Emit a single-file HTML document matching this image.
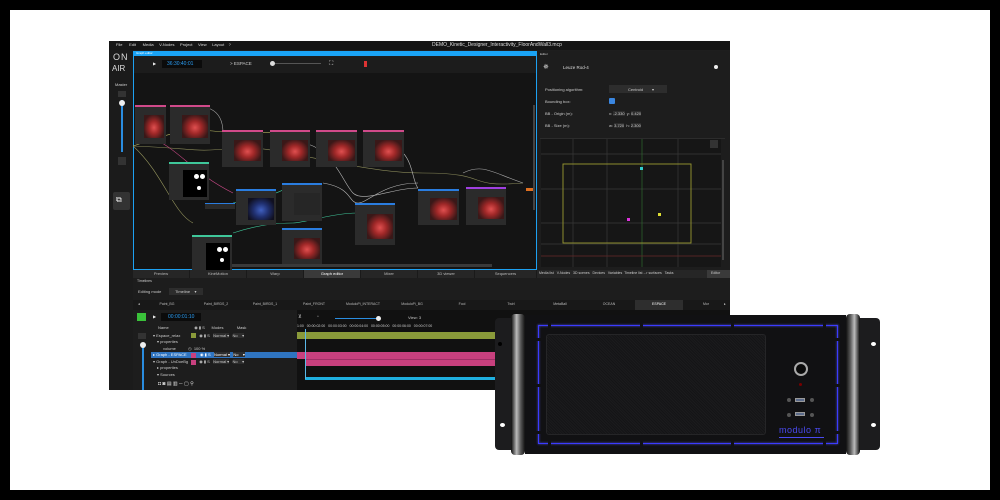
<!DOCTYPE html>
<html><head><meta charset="utf-8"><style>
*{margin:0;padding:0;box-sizing:border-box}
body{width:1000px;height:500px;background:#000;position:relative;overflow:hidden;font-family:"Liberation Sans",sans-serif}
.a{position:absolute}
.t{position:absolute;color:#ccc;font-size:4px;white-space:nowrap;line-height:1}
.node{position:absolute;background:#2b2b2b;border-top:2px solid #d04a8a}
.node .img{position:absolute;left:30%;top:22%;width:65%;height:62%;background:radial-gradient(ellipse at 50% 55%,#e05050 0%,#a02828 35%,#3a1818 75%)}
.wn{position:absolute;background:#2b2b2b;border-top:2px solid #3fc79a}
.wn .img{position:absolute;left:35%;top:18%;width:60%;height:75%;background:#000}
.dot{position:absolute;width:5px;height:5px;border-radius:50%;background:#fff}
.tab{position:absolute;top:270px;height:8px;color:#bbb;font-size:4px;text-align:center;line-height:8px;background:#262626;border-right:1px solid #1a1a1a}
.led{position:absolute;background:#3b3bff;box-shadow:0 0 2px #5a5aff}
.gap{position:absolute;background:#111113}
.sq{position:absolute;top:303px;font-size:3.5px;color:#bbb;white-space:nowrap;line-height:1;transform:translateX(-50%)}
</style></head><body>
<div class="a" style="left:10px;top:10px;width:980px;height:480px;background:#fff"></div>

<!-- software screenshot -->
<div class="a" style="left:109px;top:41px;width:621px;height:349px;background:#1e1e1e"></div>
<div class="a" style="left:109px;top:41px;width:621px;height:9px;background:#151515"></div>
<div class="t" style="left:116px;top:43px;color:#ddd">File &nbsp;&nbsp;&nbsp;&nbsp; Edit &nbsp;&nbsp;&nbsp;&nbsp; Media &nbsp;&nbsp;&nbsp; V-Nodes &nbsp;&nbsp;&nbsp; Project &nbsp;&nbsp;&nbsp; View &nbsp;&nbsp;&nbsp; Layout &nbsp;&nbsp; ?</div>
<div class="t" style="left:432px;top:43px;color:#ddd;font-size:5px">DEMO_Kinetic_Designer_Interactivity_FloorAndWall3.mcp</div>
<div class="a" style="left:109px;top:50px;width:24px;height:340px;background:#1b1b1b"></div>
<div class="t" style="left:113px;top:53px;color:#ddd;font-size:9px;letter-spacing:1px">ON</div>
<div class="t" style="left:112px;top:65px;color:#ddd;font-size:8px">AIR</div>
<div class="t" style="left:115px;top:83px">Master</div>
<div class="a" style="left:118px;top:91px;width:8px;height:6px;background:#333"></div>
<div class="a" style="left:121px;top:100px;width:2px;height:52px;background:#2a8de0"></div>
<div class="a" style="left:119px;top:100px;width:6px;height:6px;border-radius:50%;background:#eee"></div>
<div class="a" style="left:118px;top:157px;width:8px;height:8px;background:#333"></div>
<div class="a" style="left:113px;top:192px;width:17px;height:18px;background:#333;border-radius:2px"></div>
<div class="t" style="left:116px;top:196px;color:#eee;font-size:8px">⧉</div>

<!-- graph editor -->
<div class="a" style="left:133px;top:51px;width:404px;height:219px;border:1px solid #1da1f2;background:#141414"></div>
<div class="a" style="left:133px;top:51px;width:404px;height:5px;background:#1aa3f5"></div>
<div class="t" style="left:136px;top:52px;color:#fff;font-size:3px">Graph editor</div>
<div class="a" style="left:134px;top:56px;width:402px;height:17px;background:#1c1c1c"></div>
<div class="t" style="left:153px;top:62px;color:#eee">▶</div>
<div class="a" style="left:162px;top:60px;width:40px;height:8px;background:#0b0b0b"></div>
<div class="t" style="left:167px;top:62px;color:#2a9df4;font-size:5px">36:30:40:01</div>
<div class="t" style="left:230px;top:62px;font-size:4.5px">&gt; ESPACE</div>
<div class="a" style="left:271px;top:63px;width:50px;height:1px;background:#555"></div>
<div class="a" style="left:270px;top:61px;width:5px;height:5px;border-radius:50%;background:#ddd"></div>
<div class="t" style="left:329px;top:61px;font-size:6px">⛶</div>
<div class="a" style="left:364px;top:61px;width:3px;height:6px;background:#d33"></div>
<svg class="a" style="left:133px;top:73px" width="404" height="197">
<g fill="none" stroke-width="0.6">
<path d="M0 73 C60 75 60 80 100 75 S220 100 290 100 S330 115 390 110" stroke="#8a8a5a"/>
<path d="M0 73 C40 60 50 55 80 58 S140 58 150 60" stroke="#b0b060"/>
<path d="M0 73 C30 100 40 140 60 150" stroke="#999960"/>
<path d="M75 35 C90 40 90 55 90 60" stroke="#aaa"/>
<path d="M20 65 C50 80 60 100 100 120" stroke="#d04a8a"/>
<path d="M170 70 C200 75 210 110 220 120 S260 115 285 115" stroke="#bbb"/>
<path d="M270 80 C280 90 280 110 285 115" stroke="#bbb"/>
<path d="M100 130 C130 125 150 120 160 110" stroke="#3fc79a"/>
<path d="M100 160 C130 150 150 150 160 150 S200 140 225 140" stroke="#3fc79a"/>
<path d="M190 110 C220 115 215 130 225 130 S250 110 285 110" stroke="#bbb"/>
<path d="M330 100 C350 90 360 100 390 110" stroke="#aaa"/>
</g></svg>
<div class="node" style="left:135px;top:105px;width:31px;height:39px"><div class="img"></div></div>
<div class="node" style="left:170px;top:105px;width:40px;height:39px"><div class="img"></div></div>
<div class="node" style="left:222px;top:130px;width:41px;height:37px"><div class="img"></div></div>
<div class="node" style="left:270px;top:130px;width:40px;height:37px"><div class="img"></div></div>
<div class="node" style="left:316px;top:130px;width:41px;height:37px"><div class="img"></div></div>
<div class="node" style="left:363px;top:130px;width:41px;height:37px"><div class="img"></div></div>
<div class="wn" style="left:169px;top:162px;width:40px;height:38px"><div class="img"></div><div class="dot" style="left:25px;top:10px"></div><div class="dot" style="left:31px;top:10px"></div><div class="dot" style="left:28px;top:22px;width:4px;height:4px"></div></div>
<div class="wn" style="left:192px;top:235px;width:40px;height:37px"><div class="img"></div><div class="dot" style="left:25px;top:10px"></div><div class="dot" style="left:31px;top:10px"></div><div class="dot" style="left:28px;top:21px;width:4px;height:4px"></div></div>
<div class="a" style="left:205px;top:203px;width:30px;height:6px;background:#2b2b2b;border-top:1px solid #2a7de0"></div>
<div class="node" style="left:236px;top:189px;width:40px;height:36px;border-top-color:#2a7de0"><div class="img" style="background:radial-gradient(ellipse at 50% 55%,#4060c0 0%,#203070 40%,#101020 80%)"></div></div>
<div class="node" style="left:282px;top:183px;width:40px;height:38px;border-top-color:#2a7de0"><div class="img" style="background:#262626"></div></div>
<div class="node" style="left:282px;top:228px;width:40px;height:37px;border-top-color:#2a7de0"><div class="img"></div></div>
<div class="node" style="left:355px;top:203px;width:40px;height:42px;border-top-color:#2a7de0"><div class="img"></div></div>
<div class="node" style="left:418px;top:189px;width:41px;height:36px;border-top-color:#2a7de0"><div class="img"></div></div>
<div class="node" style="left:466px;top:187px;width:40px;height:38px;border-top-color:#a040e0"><div class="img"></div></div>
<div class="a" style="left:526px;top:188px;width:8px;height:3px;background:#e07020"></div>
<div class="a" style="left:533px;top:105px;width:2px;height:105px;background:#444"></div>
<div class="a" style="left:232px;top:264px;width:260px;height:3px;background:#3a3a3a"></div>

<!-- editor panel -->
<div class="a" style="left:538px;top:51px;width:192px;height:219px;background:#1d1d1d"></div>
<div class="t" style="left:540px;top:53px;font-size:3px">Editor</div>
<div class="t" style="left:543px;top:64px;font-size:7px;color:#ddd">✵</div>
<div class="t" style="left:563px;top:66px;font-size:4.5px;color:#ddd">Leuze Rod-4</div>
<div class="a" style="left:714px;top:65px;width:4px;height:4px;border-radius:50%;background:#eee"></div>
<div class="t" style="left:545px;top:88px">Positioning algorithm:</div>
<div class="a" style="left:609px;top:85px;width:58px;height:8px;background:#2d2d2d"></div>
<div class="t" style="left:628px;top:88px">Centroid &nbsp;&nbsp;&nbsp;&nbsp;&nbsp;&nbsp;&nbsp;▾</div>
<div class="t" style="left:545px;top:100px">Bounding box:</div>
<div class="a" style="left:609px;top:98px;width:6px;height:6px;background:#3a86e0;border-radius:1px"></div>
<div class="t" style="left:545px;top:112px">BB - Origin (m):</div>
<div class="t" style="left:609px;top:112px">x: <span style="background:#2d2d2d">-2.330</span> &nbsp;y: <span style="background:#2d2d2d">0.420</span></div>
<div class="t" style="left:545px;top:124px">BB - Size (m):</div>
<div class="t" style="left:609px;top:124px">w: <span style="background:#2d2d2d">3.720</span> &nbsp;h: <span style="background:#2d2d2d">2.300</span></div>
<div class="a" style="left:540px;top:138px;width:185px;height:1px;background:#2c2c2c"></div>
<div class="a" style="left:541px;top:139px;width:180px;height:128px;background:#161616"></div>
<svg class="a" style="left:541px;top:139px" width="180" height="128">
<g stroke="#3a3a3a" stroke-width="0.7"><line x1="32" y1="0" x2="32" y2="128"/><line x1="66" y1="0" x2="66" y2="128"/><line x1="137" y1="0" x2="137" y2="128"/><line x1="0" y1="15" x2="180" y2="15"/><line x1="0" y1="50" x2="180" y2="50"/><line x1="0" y1="84" x2="180" y2="84"/><line x1="0" y1="105" x2="180" y2="105"/></g>
<line x1="101" y1="0" x2="101" y2="128" stroke="#2d6a2d" stroke-width="0.7"/>
<line x1="0" y1="117" x2="180" y2="117" stroke="#6a2a2a" stroke-width="0.7"/>
<rect x="22" y="25" width="128" height="79" fill="none" stroke="#9a9a30" stroke-width="0.9"/>
<rect x="99" y="28" width="3" height="3" fill="#3cc"/><rect x="86" y="79" width="3" height="3" fill="#d3d"/><rect x="117" y="74" width="3" height="3" fill="#dd3"/>
</svg>
<div class="a" style="left:710px;top:140px;width:8px;height:8px;background:#333"></div>
<div class="a" style="left:722px;top:160px;width:2px;height:100px;background:#444"></div>

<!-- tabs row -->
<div class="a" style="left:133px;top:270px;width:597px;height:8px;background:#262626"></div>
<div class="tab" style="left:133px;width:57px">Preview</div>
<div class="tab" style="left:190px;width:57px">KinéMotion</div>
<div class="tab" style="left:247px;width:57px">Warp</div>
<div class="tab" style="left:304px;width:57px;background:#3a3a3a;color:#fff">Graph editor</div>
<div class="tab" style="left:361px;width:57px">Mixer</div>
<div class="tab" style="left:418px;width:57px">3D viewer</div>
<div class="tab" style="left:475px;width:62px">Sequencers</div>
<div class="t" style="left:539px;top:272px;font-size:3.5px">Media list &nbsp; V-Nodes &nbsp; 3D scenes &nbsp; Devices &nbsp; Variables &nbsp;Timeline list ...r surfaces &nbsp; Tasks</div>
<div class="a" style="left:707px;top:270px;width:23px;height:8px;background:#3a3a3a"></div>
<div class="t" style="left:711px;top:272px;font-size:3.5px">Editor</div>

<!-- timeline -->
<div class="a" style="left:133px;top:278px;width:597px;height:112px;background:#1d1d1d"></div>
<div class="t" style="left:137px;top:280px;font-size:3.5px">Timelines</div>
<div class="t" style="left:138px;top:290px">Editing mode &nbsp;&nbsp;&nbsp;&nbsp;&nbsp; <span style="background:#2d2d2d;padding:1px 6px">Timeline &nbsp;&nbsp; ▾</span></div>
<div class="a" style="left:133px;top:300px;width:597px;height:10px;background:#181818"></div>
<div class="t" style="left:138px;top:303px;font-size:3.5px">◂</div>
<div class="a" style="left:635px;top:300px;width:48px;height:10px;background:#2e2e2e"></div>
<div class="sq" style="left:167px">Paint_BG</div>
<div class="sq" style="left:216px">Paint_BIRDS_2</div>
<div class="sq" style="left:265px">Paint_BIRDS_1</div>
<div class="sq" style="left:314px">Paint_FRONT</div>
<div class="sq" style="left:363px">ModuloPi_INTERACT</div>
<div class="sq" style="left:412px">ModuloPi_BG</div>
<div class="sq" style="left:462px">Fool</div>
<div class="sq" style="left:511px">Twirl</div>
<div class="sq" style="left:560px">MetaBall</div>
<div class="sq" style="left:609px">OCEAN</div>
<div class="sq" style="left:659px;color:#fff">ESPACE</div>
<div class="sq" style="left:706px">Mor</div>
<div class="t" style="left:724px;top:303px;font-size:3.5px">▸</div>
<div class="a" style="left:137px;top:313px;width:9px;height:8px;background:#3ac23a"></div>
<div class="t" style="left:153px;top:315px;color:#eee">▶</div>
<div class="a" style="left:161px;top:313px;width:40px;height:8px;background:#0b0b0b"></div>
<div class="t" style="left:168px;top:315px;color:#2a9df4;font-size:5px">00:00:01:10</div>
<div class="t" style="left:158px;top:326px">Name &nbsp;&nbsp;&nbsp;&nbsp;&nbsp;&nbsp;&nbsp;&nbsp;&nbsp;&nbsp;&nbsp;&nbsp;&nbsp;&nbsp;&nbsp;&nbsp;&nbsp;&nbsp;&nbsp;&nbsp;&nbsp;&nbsp;◉ ▮ S &nbsp;&nbsp;&nbsp;&nbsp;&nbsp;Modes &nbsp;&nbsp;&nbsp;&nbsp;&nbsp;&nbsp;&nbsp;&nbsp;&nbsp;&nbsp;&nbsp;Mask</div>
<div class="a" style="left:138px;top:333px;width:8px;height:6px;background:#333"></div>
<div class="a" style="left:142px;top:344px;width:2px;height:46px;background:#2a8de0"></div>
<div class="a" style="left:140px;top:342px;width:6px;height:6px;border-radius:50%;background:#eee"></div>
<div class="t" style="left:153px;top:334px">▾ Espace_relax &nbsp;&nbsp;&nbsp;&nbsp;&nbsp;&nbsp;&nbsp;&nbsp;&nbsp;&nbsp;&nbsp;&nbsp;&nbsp;&nbsp;&nbsp;&nbsp;◉ ▮ S &nbsp;&nbsp;<span style="background:#2d2d2d">Normal ▾</span> &nbsp;&nbsp;<span style="background:#2d2d2d">No &nbsp;&nbsp;&nbsp;▾</span></div>
<div class="a" style="left:191px;top:333px;width:5px;height:5px;background:#8a9a3a"></div>
<div class="t" style="left:157px;top:340px">▾ properties</div>
<div class="t" style="left:163px;top:347px">volume &nbsp;&nbsp;&nbsp;&nbsp;&nbsp;&nbsp;&nbsp;&nbsp;&nbsp;&nbsp;◷ &nbsp;100 %</div>
<div class="a" style="left:151px;top:352px;width:146px;height:6px;background:#2f74c0"></div>
<div class="t" style="left:153px;top:353px;color:#fff">▸ Graph - ESPACE &nbsp;&nbsp;&nbsp;&nbsp;&nbsp;&nbsp;&nbsp;&nbsp;&nbsp;&nbsp;&nbsp;◉ ▮ S &nbsp;&nbsp;<span style="background:#2d2d2d">Normal ▾</span> &nbsp;&nbsp;<span style="background:#2d2d2d">No &nbsp;&nbsp;&nbsp;▾</span></div>
<div class="t" style="left:153px;top:360px">▾ Graph - UnDoeBg &nbsp;&nbsp;&nbsp;&nbsp;&nbsp;&nbsp;&nbsp;&nbsp;&nbsp;◉ ▮ S &nbsp;&nbsp;<span style="background:#2d2d2d">Normal ▾</span> &nbsp;&nbsp;<span style="background:#2d2d2d">No &nbsp;&nbsp;&nbsp;▾</span></div>
<div class="a" style="left:191px;top:353px;width:5px;height:5px;background:#c8407e"></div>
<div class="a" style="left:191px;top:360px;width:5px;height:5px;background:#c8407e"></div>
<div class="t" style="left:157px;top:366px">▸ properties</div>
<div class="t" style="left:157px;top:373px">▾ Sources</div>
<div class="t" style="left:158px;top:382px;color:#ddd;font-size:5px">◘ ◙ ▤ ▥ ─ ▢ ⚲</div>
<div class="a" style="left:297px;top:310px;width:433px;height:80px;background:#111"></div>
<div class="t" style="left:298px;top:315px;font-size:5px">⊻ &nbsp;&nbsp;&nbsp;&nbsp;&nbsp;&nbsp;&nbsp;&nbsp;&nbsp;&nbsp;▫</div>
<div class="a" style="left:335px;top:318px;width:45px;height:1px;background:#2a8de0"></div>
<div class="a" style="left:376px;top:316px;width:5px;height:5px;border-radius:50%;background:#eee"></div>
<div class="t" style="left:408px;top:316px">View: 3</div>
<div class="t" style="left:297px;top:325px;font-size:3.5px">1:00 &nbsp;&nbsp;00:00:02:00 &nbsp;&nbsp;00:00:03:00 &nbsp;&nbsp;00:00:04:00 &nbsp;&nbsp;00:00:05:00 &nbsp;&nbsp;00:00:06:00 &nbsp;&nbsp;00:00:07:00</div>
<div class="a" style="left:297px;top:332px;width:230px;height:7px;background:#8a9a3a"></div>
<div class="a" style="left:297px;top:352px;width:230px;height:7px;background:#c8407e"></div>
<div class="a" style="left:305px;top:359px;width:222px;height:7px;background:#c8407e;border-top:1px solid #a03066"></div>
<div class="a" style="left:305px;top:377px;width:222px;height:3px;background:#1fb0e0"></div>
<div class="a" style="left:305px;top:329px;width:1px;height:50px;background:#5ab8e8"></div>

<!-- server -->
<div class="a" style="left:495px;top:318px;width:385px;height:132px;background:#1c1c1e;border-radius:4px"></div>
<div class="a" style="left:498px;top:342px;width:4px;height:4px;border-radius:50%;background:#000"></div>
<div class="a" style="left:871px;top:342px;width:5px;height:4px;border-radius:50%;background:#fff"></div>
<div class="a" style="left:500px;top:423px;width:5px;height:4px;border-radius:50%;background:#fff"></div>
<div class="a" style="left:871px;top:423px;width:5px;height:4px;border-radius:50%;background:#fff"></div>
<div class="a" style="left:511px;top:314px;width:14px;height:141px;background:linear-gradient(90deg,#0a0a0a,#bbb 40%,#555 70%,#111);border-radius:4px"></div>
<div class="a" style="left:846px;top:314px;width:14px;height:141px;background:linear-gradient(90deg,#111,#555 30%,#bbb 60%,#0a0a0a);border-radius:4px"></div>
<div class="a" style="left:525px;top:315px;width:321px;height:139px;background:#111113"></div>
<div class="led" style="left:538px;top:325px;width:300px;height:1px"></div>
<div class="led" style="left:538px;top:443px;width:300px;height:1px"></div>
<div class="led" style="left:538px;top:325px;width:1px;height:118px"></div>
<div class="led" style="left:837px;top:325px;width:1px;height:118px"></div>
<div class="gap" style="left:548px;top:323px;width:3px;height:5px"></div>
<div class="gap" style="left:640px;top:323px;width:3px;height:5px"></div>
<div class="gap" style="left:731px;top:323px;width:3px;height:5px"></div>
<div class="gap" style="left:823px;top:323px;width:3px;height:5px"></div>
<div class="gap" style="left:548px;top:441px;width:3px;height:5px"></div>
<div class="gap" style="left:640px;top:441px;width:3px;height:5px"></div>
<div class="gap" style="left:731px;top:441px;width:3px;height:5px"></div>
<div class="gap" style="left:823px;top:441px;width:3px;height:5px"></div>
<div class="gap" style="left:536px;top:338px;width:5px;height:3px"></div>
<div class="gap" style="left:536px;top:384px;width:5px;height:3px"></div>
<div class="gap" style="left:536px;top:431px;width:5px;height:3px"></div>
<div class="gap" style="left:835px;top:338px;width:5px;height:3px"></div>
<div class="gap" style="left:835px;top:384px;width:5px;height:3px"></div>
<div class="gap" style="left:835px;top:431px;width:5px;height:3px"></div>
<div class="a" style="left:546px;top:334px;width:220px;height:101px;background:repeating-linear-gradient(45deg,#1b1b1d 0 1px,#141416 1px 2px);border-radius:3px;border:1px solid #252527"></div>
<div class="a" style="left:794px;top:362px;width:14px;height:14px;border-radius:50%;border:2px solid #aaa;background:#0a0a0a"></div>
<div class="a" style="left:799px;top:383px;width:3px;height:3px;border-radius:50%;background:#700"></div>
<div class="a" style="left:795px;top:398px;width:10px;height:4px;background:#5a6a8a;border:1px solid #999"></div>
<div class="a" style="left:795px;top:412px;width:10px;height:4px;background:#5a6a8a;border:1px solid #999"></div>
<div class="a" style="left:787px;top:398px;width:4px;height:4px;border-radius:50%;background:#555"></div>
<div class="a" style="left:810px;top:398px;width:4px;height:4px;border-radius:50%;background:#555"></div>
<div class="a" style="left:787px;top:413px;width:4px;height:4px;border-radius:50%;background:#555"></div>
<div class="a" style="left:810px;top:413px;width:4px;height:4px;border-radius:50%;background:#555"></div>
<div class="t" style="left:779px;top:426px;color:#4a4af0;font-size:9px;letter-spacing:0.5px">modulo π</div>
<div class="a" style="left:779px;top:437px;width:45px;height:1px;background:#4a4af0"></div>
</body></html>
